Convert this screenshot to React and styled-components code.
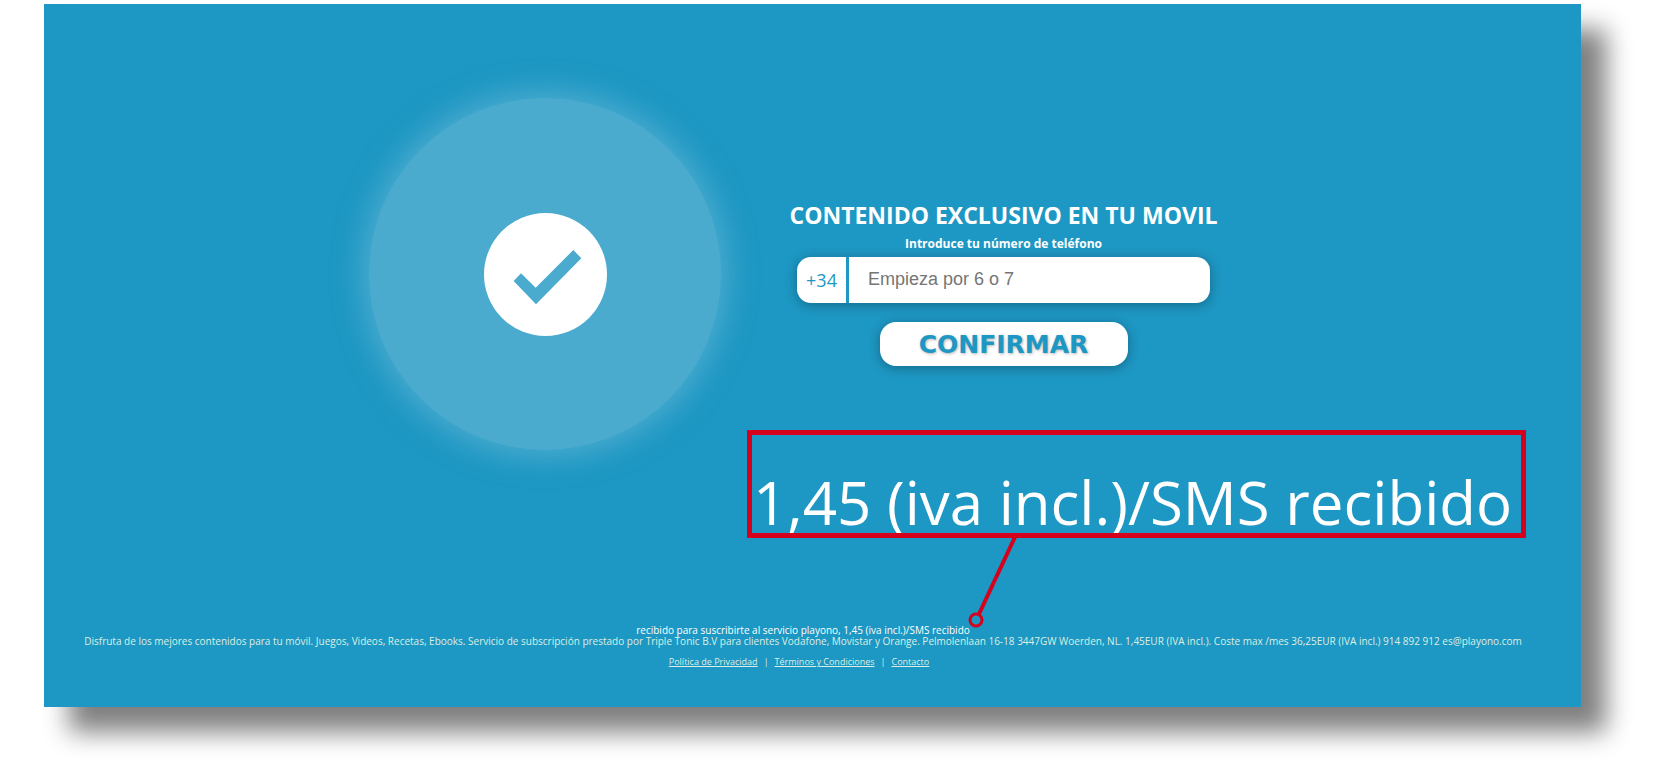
import React from "react";
import styled, { createGlobalStyle } from "styled-components";

const BLUE = "#1d97c3";
const LIGHT = "#4aabcf";
const RED = "#d6001c";

const GlobalStyle = createGlobalStyle`
  *, *::before, *::after { box-sizing: border-box; }
  body {
    margin: 0;
    background: #fff;
    font-family: "Open Sans", "Noto Sans", sans-serif;
    color: #fff;
  }
`;

const Page = styled.div`
  display: flex;
  min-height: 100vh;
  padding: 4px 96px 60px 44px;
`;

const Panel = styled.main`
  position: relative;
  flex: 1;
  display: flex;
  flex-direction: column;
  justify-content: space-between;
  padding: 94px 19px 39px 0;
  background: ${BLUE};
  box-shadow: 25px 25px 24px #808080;
`;

const Hero = styled.section`
  display: flex;
  justify-content: center;
  align-items: center;
  gap: 68px;
  padding-right: 19px;
`;

const Halo = styled.div`
  display: flex;
  justify-content: center;
  align-items: center;
  width: 352px;
  height: 352px;
  border-radius: 50%;
  background: ${LIGHT};
  box-shadow: 0 0 28px 8px ${LIGHT};
`;

const CheckBadge = styled.svg`
  width: 123px;
  height: 123px;
`;

const Form = styled.form`
  display: flex;
  flex-direction: column;
  align-items: center;
  padding-top: 16px;
`;

const Title = styled.h1`
  margin: 0;
  font-size: 23px;
  line-height: 32px;
  font-weight: 700;
  white-space: nowrap;
`;

const FieldLabel = styled.label`
  margin: 4px 0;
  font-size: 12px;
  line-height: 18px;
  font-weight: 700;
`;

const Field = styled.div`
  display: flex;
  width: 413px;
  height: 46px;
  border-radius: 14px;
  overflow: hidden;
  background: #fff;
  box-shadow: 0 2px 12px rgba(0, 0, 0, 0.3);
`;

const Prefix = styled.span`
  display: flex;
  align-items: center;
  justify-content: center;
  width: 52px;
  border-right: 3px solid ${BLUE};
  color: ${BLUE};
  font-size: 18px;
`;

const PhoneInput = styled.input`
  flex: 1;
  min-width: 0;
  padding: 0 19px;
  border: 0;
  outline: 0;
  background: transparent;
  color: #333;
  font-family: "Liberation Sans", Arial, sans-serif;
  font-size: 18px;

  &::placeholder { color: #757575; opacity: 1; }
`;

const ConfirmButton = styled.button`
  width: 248px;
  height: 44px;
  margin-top: 19px;
  padding: 2px 0 0;
  border: 0;
  border-radius: 16px;
  background: #fff;
  color: ${BLUE};
  font-family: "Arial Black", "DejaVu Sans", sans-serif;
  font-size: 25px;
  font-weight: 900;
  line-height: 42px;
  text-shadow: 1px 1px 3px rgba(0, 0, 0, 0.3);
  box-shadow: 0 2px 12px rgba(0, 0, 0, 0.3);
  cursor: pointer;
`;

const Callout = styled.aside`
  position: absolute;
  right: 55px;
  bottom: 169px;
  width: 779px;
  height: 108px;
  border: 5px solid ${RED};
`;

const CalloutText = styled.p`
  height: 98px;
  margin: 0;
  overflow: hidden;
  padding: 36px 8px 0 0;
  text-align: center;
  font-size: 60px;
  line-height: 62px;
  white-space: nowrap;
`;

const Connector = styled.svg`
  position: absolute;
  top: 100px;
  left: 212px;
  width: 60px;
  height: 96px;
`;

const Footer = styled.footer`
  text-align: center;
  color: #dcefe4;
`;

const LegalLine = styled.p`
  margin: 0;
  font-size: 10px;
  line-height: 11px;
  color: ${(p) => (p.$strong ? "#fff" : "inherit")};
`;

const LegalNav = styled.nav`
  display: flex;
  justify-content: center;
  gap: 6px;
  margin-top: 9px;
  padding-right: 8px;
  font-size: 9px;
  line-height: 12px;
`;

const LegalLink = styled.a`
  color: inherit;
  text-decoration: underline;
`;

export default function App() {
  return (
    <>
      <GlobalStyle />
      <Page>
        <Panel>
          <Hero>
            <Halo>
              <CheckBadge viewBox="0 0 369 369" aria-hidden="true">
                <circle cx="184.5" cy="184.5" r="184.5" fill="#fff" />
                <path
                  d="M89 204 L111 181 L155 224 L268 111 L292 136 L156 274 Z"
                  fill={LIGHT}
                />
              </CheckBadge>
            </Halo>
            <Form onSubmit={(e) => e.preventDefault()}>
              <Title>CONTENIDO EXCLUSIVO EN TU MOVIL</Title>
              <FieldLabel htmlFor="phone">Introduce tu número de teléfono</FieldLabel>
              <Field>
                <Prefix>+34</Prefix>
                <PhoneInput id="phone" type="tel" placeholder="Empieza por 6 o 7" />
              </Field>
              <ConfirmButton type="submit">CONFIRMAR</ConfirmButton>
            </Form>
          </Hero>

          <Footer>
            <LegalLine $strong>
              recibido para suscribirte al servicio playono, 1,45 (iva incl.)/SMS recibido
            </LegalLine>
            <LegalLine>
              Disfruta de los mejores contenidos para tu móvil. Juegos, Videos, Recetas, Ebooks.
              Servicio de subscripción prestado por Triple Tonic B.V para clientes Vodafone,
              Movistar y Orange. Pelmolenlaan 16-18 3447GW Woerden, NL. 1,45EUR (IVA incl.). Coste
              max /mes 36,25EUR (IVA incl.) 914 892 912 es@playono.com
            </LegalLine>
            <LegalNav>
              <LegalLink href="#privacidad">Política de Privacidad</LegalLink>
              <span>|</span>
              <LegalLink href="#terminos">Términos y Condiciones</LegalLink>
              <span>|</span>
              <LegalLink href="#contacto">Contacto</LegalLink>
            </LegalNav>
          </Footer>

          <Callout>
            <CalloutText>1,45 (iva incl.)/SMS recibido</CalloutText>
            <Connector viewBox="0 0 60 96" fill="none" stroke={RED} aria-hidden="true">
              <line x1="51" y1="2" x2="15" y2="79" strokeWidth="4" />
              <circle cx="12" cy="85" r="6" strokeWidth="3" />
            </Connector>
          </Callout>
        </Panel>
      </Page>
    </>
  );
}
